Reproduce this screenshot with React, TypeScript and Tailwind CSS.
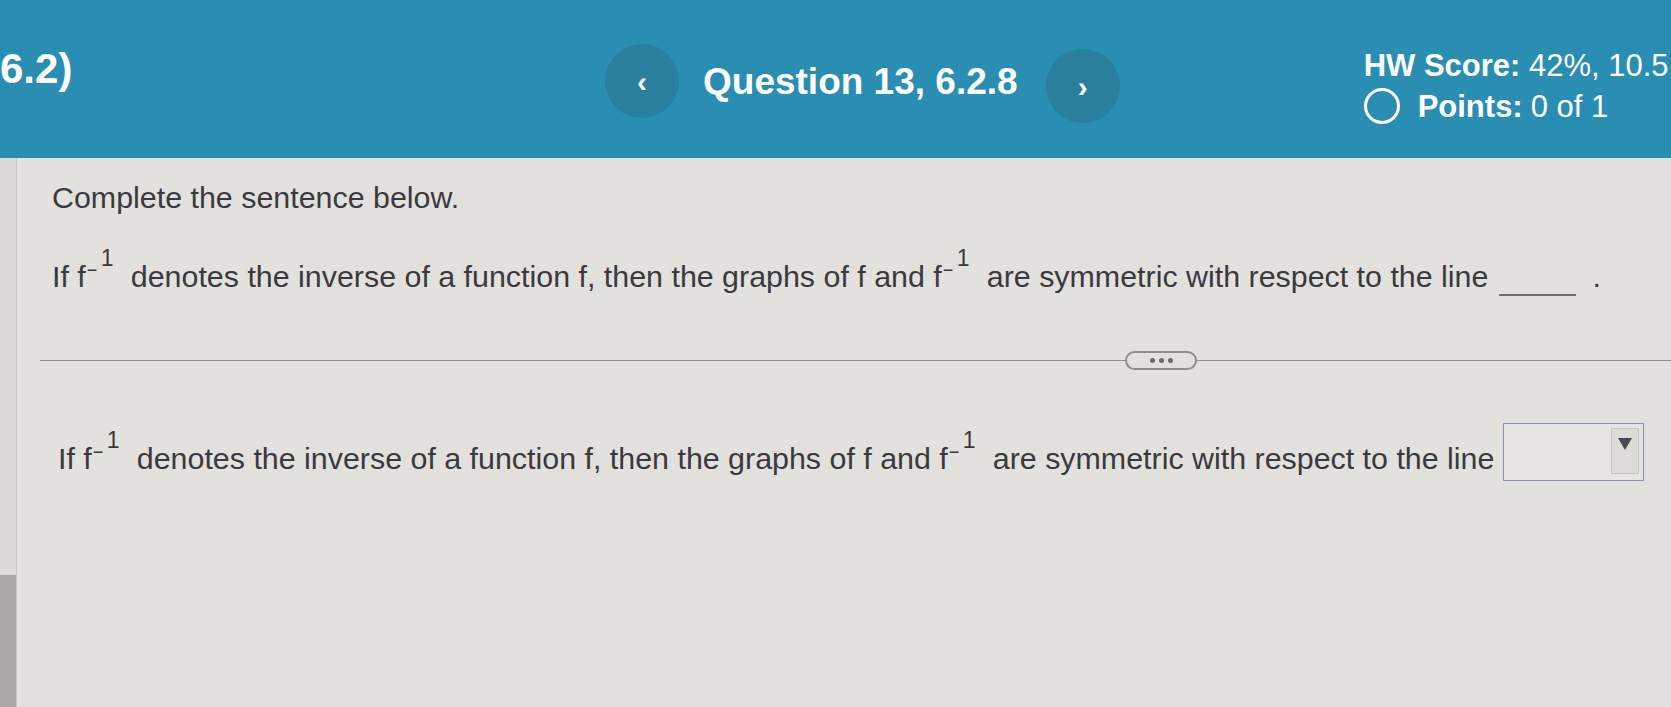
import React from "react";

function Inv() {
  return (
    <span className="inline-flex items-start">
      <span>f</span>
      <span className="relative ml-[1px] mr-[14px] inline-block w-[30px]">
        <span className="absolute left-[0px] top-[0px] text-[18px] leading-none">−</span>
        <span className="absolute left-[14px] top-[-14px] text-[23px] leading-none">1</span>
      </span>
    </span>
  );
}

export default function App() {
  return (
    <div
      className="relative h-[707px] w-[1671px] overflow-hidden bg-[#e3e1dd]"
      style={{ fontFamily: '"Liberation Sans", Arial, sans-serif' }}
    >
      {/* Header */}
      <div className="flex h-[158px] items-center whitespace-nowrap bg-[#2a8eb2] pb-[10px] text-white">
        <div className="w-[605px] shrink-0 pb-[10px] text-[42px] font-bold leading-none">6.2)</div>
        <div className="flex shrink-0 items-center pt-[14px]">
          <div className="flex h-[74px] w-[74px] items-center justify-center rounded-full bg-[#2a7f9f] text-[30px] font-bold">
            ‹
          </div>
          <div className="ml-[24px] text-[37px] font-bold leading-none">Question 13, 6.2.8</div>
          <div className="ml-[28px] mt-[10px] flex h-[74px] w-[74px] items-center justify-center rounded-full bg-[#2a7f9f] text-[30px] font-bold">
            ›
          </div>
        </div>
        <div className="ml-[244px] flex shrink-0 flex-col pt-[26px] text-[31px] leading-none">
          <div>
            <span className="font-bold">HW Score:</span> 42%, 10.5
          </div>
          <div className="mt-[7px] flex items-center">
            <span className="inline-block h-[36px] w-[36px] rounded-full border-[3px] border-white" />
            <span className="ml-[18px] font-bold">Points:</span>
            <span className="ml-[8px]">0 of 1</span>
          </div>
        </div>
      </div>

      {/* Body */}
      <div className="flex h-[549px]">
        <div className="flex w-[17px] shrink-0 flex-col border-r border-[#c9c7c3] bg-[#dcdad6]">
          <div className="flex-1" />
          <div className="h-[132px] bg-[#a9a8a6]" />
        </div>
        <div className="flex flex-1 flex-col whitespace-nowrap text-[30.4px] leading-none text-[#3a3940]">
          <div className="pl-[35px] pt-[24px]">Complete the sentence below.</div>
          <div className="mt-[49px] flex items-end pl-[35px]">
            <span>If&nbsp;</span>
            <Inv />
            <span>denotes the inverse of a function f, then the graphs of f and&nbsp;</span>
            <Inv />
            <span>are symmetric with respect to the line</span>
            <span className="ml-[11px] mb-[-4px] inline-block w-[77px] border-b-2 border-[#6d6c72]" />
            <span className="ml-[16px]">.</span>
          </div>
          <div className="relative mt-[68px] ml-[23px] h-px bg-[#8d8c90]">
            <div className="absolute left-[1085px] top-[-9px] flex h-[19px] w-[72px] items-center justify-center gap-[4px] rounded-full border-2 border-[#8d8c90] bg-[#e3e1dd]">
              <span className="h-[5px] w-[5px] rounded-full bg-[#6a6970]" />
              <span className="h-[5px] w-[5px] rounded-full bg-[#6a6970]" />
              <span className="h-[5px] w-[5px] rounded-full bg-[#6a6970]" />
            </div>
          </div>
          <div className="mt-[62px] flex items-center pl-[41px]">
            <div className="flex items-end">
              <span>If&nbsp;</span>
              <Inv />
              <span>denotes the inverse of a function f, then the graphs of f and&nbsp;</span>
              <Inv />
              <span>are symmetric with respect to the line</span>
            </div>
            <div className="mb-[12px] ml-[9px] flex h-[58px] w-[141px] items-start justify-end border border-[#8b8fb5] bg-[#e6e5e2] p-[4px]">
              <div className="flex h-[46px] w-[28px] items-start justify-center border border-[#c4c3c0] bg-[#dddcd9] pt-[8px]">
                <svg width="16" height="14" viewBox="0 0 16 14">
                  <path d="M1 1 L15 1 L8 13 Z" fill="#4a4a50" />
                </svg>
              </div>
            </div>
          </div>
        </div>
      </div>
    </div>
  );
}
